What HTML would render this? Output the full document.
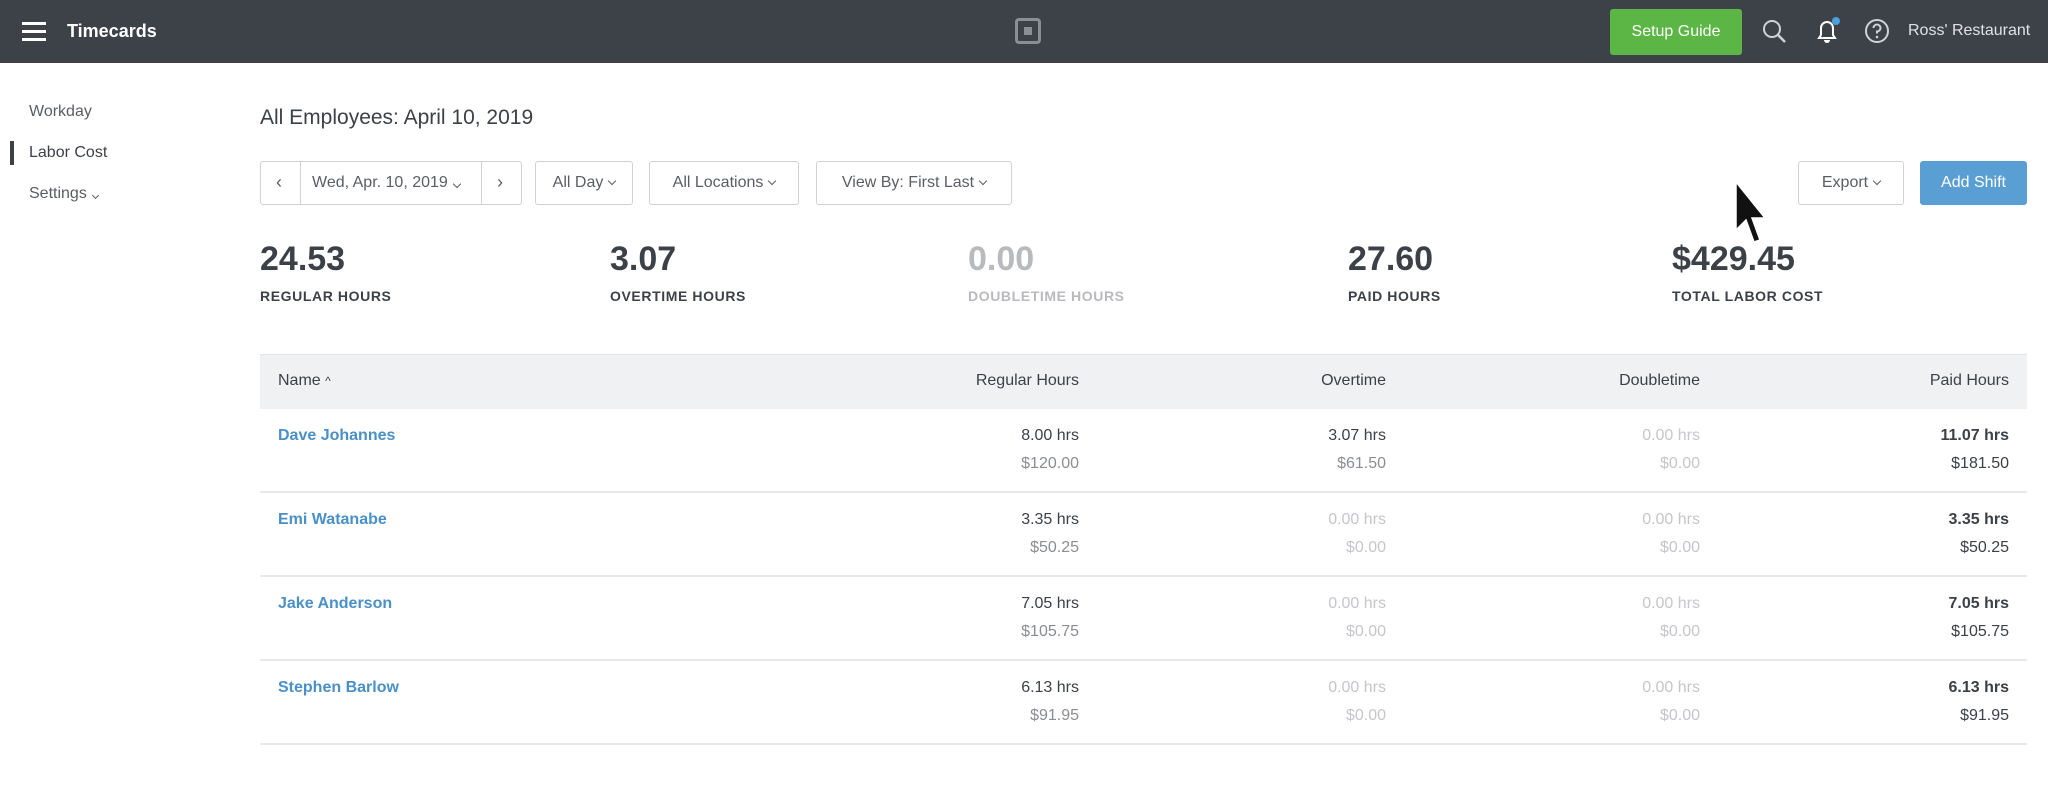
<!DOCTYPE html>
<html><head><meta charset="utf-8"><style>
*{box-sizing:border-box;margin:0;padding:0}
body{width:2048px;height:788px;background:#fff;font-family:"Liberation Sans",sans-serif;color:#3c4047;position:relative;overflow:hidden}
.a{position:absolute;white-space:nowrap}
.hdr{position:absolute;left:0;top:0;width:2048px;height:63px;background:#3d4148}
.btn{position:absolute;top:161px;height:44px;border:1px solid #cfd1d4;border-radius:3px;background:#fff;font-size:16px;color:#5a5e64;display:flex;align-items:center;justify-content:center}
.chev{display:inline-block;width:6px;height:6px;border-right:1.5px solid #5a5e64;border-bottom:1.5px solid #5a5e64;transform:rotate(45deg);margin-left:6px;margin-top:-4px}
.num{position:absolute;top:240px;font-size:34px;font-weight:bold;color:#3c4047}
.lbl{position:absolute;top:288px;font-size:14px;font-weight:bold;letter-spacing:0.6px;color:#3c4047}
.th{position:absolute;top:372px;font-size:16px;color:#3c4047}
.c{position:absolute;font-size:16px;text-align:right;width:200px}
.sep{position:absolute;left:260px;width:1767px;height:2px;background:#e8e9ea}
.nm{position:absolute;left:278px;font-size:16px;color:#4a90c8;font-weight:bold}
</style></head><body>
<div class="hdr"></div>
<div class="a" style="left:22px;top:22px;width:24px;height:3px;background:#fff"></div>
<div class="a" style="left:22px;top:30px;width:24px;height:3px;background:#fff"></div>
<div class="a" style="left:22px;top:38px;width:24px;height:3px;background:#fff"></div>
<div class="a" style="left:67px;top:21px;font-size:18px;font-weight:bold;color:#fff">Timecards</div>
<div class="a" style="left:1015px;top:18px;width:26px;height:26px;border:3px solid #8b8e93;border-radius:4px"></div>
<div class="a" style="left:1024px;top:27px;width:8px;height:8px;background:#8b8e93"></div>
<div class="a" style="left:1610px;top:9px;width:132px;height:46px;background:#5bb646;border-radius:3px;color:#fff;font-size:16px;display:flex;align-items:center;justify-content:center">Setup Guide</div>
<svg class="a" style="left:1762px;top:19px" width="26" height="26" viewBox="0 0 26 26"><circle cx="10" cy="10" r="8" fill="none" stroke="#d0d2d5" stroke-width="2"/><line x1="16" y1="16" x2="23" y2="23" stroke="#d0d2d5" stroke-width="2.5"/></svg>
<svg class="a" style="left:1812px;top:16px" width="30" height="30" viewBox="0 0 30 30"><path d="M7 22 L9 19 V12 A6 6 0 0 1 21 12 V19 L23 22 Z" fill="none" stroke="#fff" stroke-width="2"/><path d="M12 24 A3 3 0 0 0 18 24" fill="#fff"/><circle cx="24" cy="5" r="4" fill="#4a9fe0"/></svg>
<svg class="a" style="left:1864px;top:18px" width="26" height="26" viewBox="0 0 26 26"><circle cx="13" cy="13" r="11" fill="none" stroke="#d0d2d5" stroke-width="2"/><path d="M9.5 10 A3.5 3.5 0 1 1 13 13.5 V15.5" fill="none" stroke="#d0d2d5" stroke-width="2"/><circle cx="13" cy="19" r="1.3" fill="#d0d2d5"/></svg>
<div class="a" style="left:1908px;top:22px;font-size:16px;color:#e0e1e3">Ross' Restaurant</div>

<div class="a" style="left:29px;top:103px;font-size:16px;color:#5a5e64">Workday</div>
<div class="a" style="left:10px;top:141px;width:4px;height:24px;background:#3c4047"></div>
<div class="a" style="left:29px;top:144px;font-size:16px;color:#3c4047">Labor Cost</div>
<div class="a" style="left:29px;top:185px;font-size:16px;color:#5a5e64">Settings<span class="chev" style="width:5px;height:5px"></span></div>

<div class="a" style="left:260px;top:106px;font-size:21px;color:#3c4047">All Employees: April 10, 2019</div>

<div class="btn" style="left:260px;width:262px"></div>
<div class="a" style="left:300px;top:161px;width:1px;height:44px;background:#cfd1d4"></div>
<div class="a" style="left:481px;top:161px;width:1px;height:44px;background:#cfd1d4"></div>
<div class="a" style="left:276px;top:172px;font-size:18px;color:#5a5e64">‹</div>
<div class="a" style="left:497px;top:172px;font-size:18px;color:#5a5e64">›</div>
<div class="a" style="left:312px;top:174px;font-size:16px;color:#5a5e64">Wed, Apr. 10, 2019<span class="chev"></span></div>
<div class="btn" style="left:535px;width:98px">All Day<span class="chev"></span></div>
<div class="btn" style="left:649px;width:150px">All Locations<span class="chev"></span></div>
<div class="btn" style="left:816px;width:196px">View By: First Last<span class="chev"></span></div>
<div class="btn" style="left:1798px;width:106px">Export<span class="chev"></span></div>
<div class="btn" style="left:1920px;width:107px;background:#5a9fd4;border-color:#5a9fd4;color:#fff">Add Shift</div>

<svg class="a" style="left:1733px;top:180px" width="36" height="70" viewBox="0 0 36 70"><path d="M3 2 L3 50 L13 40 L21 62 L27 60 L19 38 L32 38 Z" fill="#111" stroke="#fff" stroke-width="1.5"/></svg>

<div class="num" style="left:260px">24.53</div><div class="lbl" style="left:260px">REGULAR HOURS</div>
<div class="num" style="left:610px">3.07</div><div class="lbl" style="left:610px">OVERTIME HOURS</div>
<div class="num" style="left:968px;color:#b8babd">0.00</div><div class="lbl" style="left:968px;color:#b8babd">DOUBLETIME HOURS</div>
<div class="num" style="left:1348px">27.60</div><div class="lbl" style="left:1348px">PAID HOURS</div>
<div class="num" style="left:1672px">$429.45</div><div class="lbl" style="left:1672px">TOTAL LABOR COST</div>

<div class="a" style="left:260px;top:354px;width:1767px;height:55px;background:#f0f1f2;border-top:1px solid #e3e4e6"></div>
<div class="th" style="left:278px">Name <span style="font-size:12px">^</span></div>
<div class="th" style="left:879px;width:200px;text-align:right">Regular Hours</div>
<div class="th" style="left:1186px;width:200px;text-align:right">Overtime</div>
<div class="th" style="left:1500px;width:200px;text-align:right">Doubletime</div>
<div class="th" style="left:1809px;width:200px;text-align:right">Paid Hours</div>

<div class="nm" style="top:427px">Dave Johannes</div>
<div class="c" style="left:879px;top:427px">8.00 hrs</div><div class="c" style="left:879px;top:455px;color:#8a8d91">$120.00</div>
<div class="c" style="left:1186px;top:427px">3.07 hrs</div><div class="c" style="left:1186px;top:455px;color:#8a8d91">$61.50</div>
<div class="c" style="left:1500px;top:427px;color:#c4c6c9">0.00 hrs</div><div class="c" style="left:1500px;top:455px;color:#c4c6c9">$0.00</div>
<div class="c" style="left:1809px;top:427px;font-weight:bold">11.07 hrs</div><div class="c" style="left:1809px;top:455px">$181.50</div>
<div class="sep" style="top:491px"></div>

<div class="nm" style="top:511px">Emi Watanabe</div>
<div class="c" style="left:879px;top:511px">3.35 hrs</div><div class="c" style="left:879px;top:539px;color:#8a8d91">$50.25</div>
<div class="c" style="left:1186px;top:511px;color:#c4c6c9">0.00 hrs</div><div class="c" style="left:1186px;top:539px;color:#c4c6c9">$0.00</div>
<div class="c" style="left:1500px;top:511px;color:#c4c6c9">0.00 hrs</div><div class="c" style="left:1500px;top:539px;color:#c4c6c9">$0.00</div>
<div class="c" style="left:1809px;top:511px;font-weight:bold">3.35 hrs</div><div class="c" style="left:1809px;top:539px">$50.25</div>
<div class="sep" style="top:575px"></div>

<div class="nm" style="top:595px">Jake Anderson</div>
<div class="c" style="left:879px;top:595px">7.05 hrs</div><div class="c" style="left:879px;top:623px;color:#8a8d91">$105.75</div>
<div class="c" style="left:1186px;top:595px;color:#c4c6c9">0.00 hrs</div><div class="c" style="left:1186px;top:623px;color:#c4c6c9">$0.00</div>
<div class="c" style="left:1500px;top:595px;color:#c4c6c9">0.00 hrs</div><div class="c" style="left:1500px;top:623px;color:#c4c6c9">$0.00</div>
<div class="c" style="left:1809px;top:595px;font-weight:bold">7.05 hrs</div><div class="c" style="left:1809px;top:623px">$105.75</div>
<div class="sep" style="top:659px"></div>

<div class="nm" style="top:679px">Stephen Barlow</div>
<div class="c" style="left:879px;top:679px">6.13 hrs</div><div class="c" style="left:879px;top:707px;color:#8a8d91">$91.95</div>
<div class="c" style="left:1186px;top:679px;color:#c4c6c9">0.00 hrs</div><div class="c" style="left:1186px;top:707px;color:#c4c6c9">$0.00</div>
<div class="c" style="left:1500px;top:679px;color:#c4c6c9">0.00 hrs</div><div class="c" style="left:1500px;top:707px;color:#c4c6c9">$0.00</div>
<div class="c" style="left:1809px;top:679px;font-weight:bold">6.13 hrs</div><div class="c" style="left:1809px;top:707px">$91.95</div>
<div class="sep" style="top:743px"></div>
</body></html>
